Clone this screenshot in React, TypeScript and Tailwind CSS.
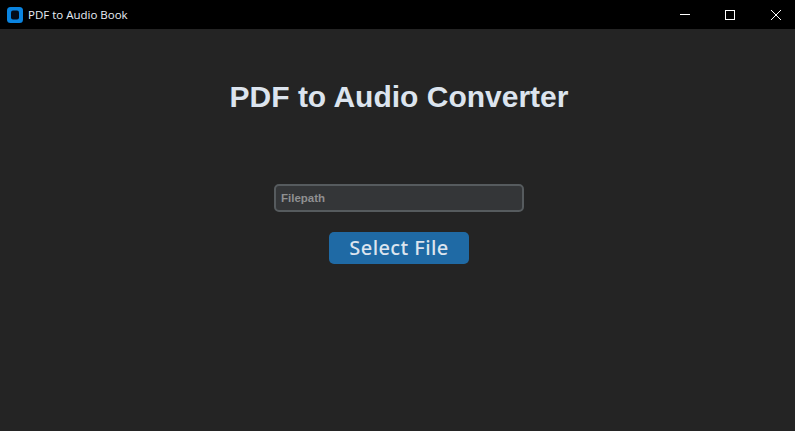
export default function App() {
  return (
    <div className="w-[795px] h-[431px] flex flex-col overflow-hidden bg-[#242424] font-['Liberation_Sans',sans-serif]">
      <div className="h-[29px] shrink-0 bg-black flex items-center justify-between">
        <div className="flex items-center pl-[7px] gap-[5px]">
          <svg width="16" height="16" viewBox="0 0 16 16">
            <rect width="16" height="16" rx="3.5" fill="#0a84e0" />
            <rect x="4" y="3.5" width="8" height="9" rx="2" fill="#040c18" />
          </svg>
          <span className="text-[11.5px] text-[#e8eef5] font-['Open_Sans',sans-serif]">PDF to Audio Book</span>
        </div>
        <div className="flex items-center gap-[35px] pr-[14px]">
          <svg width="10" height="10" viewBox="0 0 10 10">
            <path d="M0 4.5H10" stroke="#fff" strokeWidth="1" />
          </svg>
          <svg width="10" height="10" viewBox="0 0 10 10">
            <rect x="0.5" y="0.5" width="9" height="9" fill="none" stroke="#fff" strokeWidth="1" />
          </svg>
          <svg className="ml-px" width="10" height="10" viewBox="0 0 10 10">
            <path d="M0 0L10 10M10 0L0 10" stroke="#fff" strokeWidth="1" />
          </svg>
        </div>
      </div>
      <div className="flex-1 flex flex-col items-center pl-[3px]">
        <h1 className="mt-[48px] text-[30px] leading-[40px] font-bold text-[#dce4ee]">PDF to Audio Converter</h1>
        <input
          placeholder="Filepath"
          readOnly
          className="mt-[67px] w-[250px] h-[28px] px-[5px] rounded-[5px] border-2 border-[#565b5e] bg-[#343638] text-[11.5px] font-bold text-[#9e9e9e] placeholder:text-[#8f9091] outline-none"
        />
        <button className="mt-[20px] w-[140px] h-[32px] rounded-[5px] bg-[#1f6aa5] text-[#dce4ee] text-[20px] font-medium tracking-[0.4px] font-['Noto_Sans',sans-serif]">
          Select File
        </button>
      </div>
    </div>
  );
}
